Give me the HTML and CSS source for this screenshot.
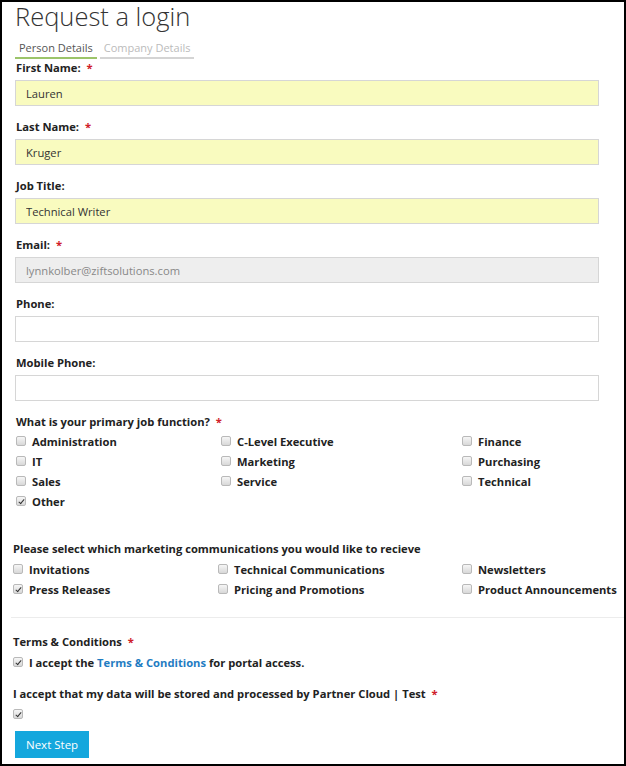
FILE: index.html
```html
<!DOCTYPE html>
<html>
<head>
	<title>Request a login</title>
	<meta charset="UTF-8">
	<meta name="viewport" content="width=device-width, initial-scale=1">
	<link rel="stylesheet" href="styles.css">
</head>
<body>
	<div class="frame">
		<h1 class="title">Request a login</h1>

		<div class="tabs">
			<span class="tab active">Person Details</span>
			<span class="tab">Company Details</span>
		</div>

		<form class="person">
			<div class="field">
				<label>First Name: <span class="req">*</span></label>
				<input type="text" class="filled" value="Lauren">
			</div>
			<div class="field">
				<label>Last Name: <span class="req">*</span></label>
				<input type="text" class="filled" value="Kruger">
			</div>
			<div class="field">
				<label>Job Title:</label>
				<input type="text" class="filled" value="Technical Writer">
			</div>
			<div class="field">
				<label>Email: <span class="req">*</span></label>
				<input type="text" class="locked" value="lynnkolber@ziftsolutions.com" readonly>
			</div>
			<div class="field">
				<label>Phone:</label>
				<input type="text">
			</div>
			<div class="field">
				<label>Mobile Phone:</label>
				<input type="text">
			</div>

			<div class="group">
				<label>What is your primary job function? <span class="req">*</span></label>
				<div class="options job">
					<label class="opt"><input type="checkbox"><span>Administration</span></label>
					<label class="opt"><input type="checkbox"><span>C-Level Executive</span></label>
					<label class="opt"><input type="checkbox"><span>Finance</span></label>
					<label class="opt"><input type="checkbox"><span>IT</span></label>
					<label class="opt"><input type="checkbox"><span>Marketing</span></label>
					<label class="opt"><input type="checkbox"><span>Purchasing</span></label>
					<label class="opt"><input type="checkbox"><span>Sales</span></label>
					<label class="opt"><input type="checkbox"><span>Service</span></label>
					<label class="opt"><input type="checkbox"><span>Technical</span></label>
					<label class="opt"><input type="checkbox" checked><span>Other</span></label>
				</div>
			</div>
		</form>

		<div class="comms">
			<label>Please select which marketing communications you would like to recieve</label>
			<div class="options mail">
				<label class="opt"><input type="checkbox"><span>Invitations</span></label>
				<label class="opt"><input type="checkbox"><span>Technical Communications</span></label>
				<label class="opt"><input type="checkbox"><span>Newsletters</span></label>
				<label class="opt"><input type="checkbox" checked><span>Press Releases</span></label>
				<label class="opt"><input type="checkbox"><span>Pricing and Promotions</span></label>
				<label class="opt"><input type="checkbox"><span>Product Announcements</span></label>
			</div>
		</div>

		<hr class="divider">

		<div class="terms">
			<label>Terms &amp; Conditions <span class="req">*</span></label>
			<label class="opt"><input type="checkbox" checked><span>I accept the <a href="#">Terms &amp; Conditions</a> for portal access.</span></label>

			<label class="consent">I accept that my data will be stored and processed by Partner Cloud | Test <span class="req">*</span></label>
			<label class="opt"><input type="checkbox" checked></label>

			<button type="button" class="btn">Next Step</button>
		</div>
	</div>
</body>
</html>
```

FILE: styles.css
```css
* {
	margin: 0;
	padding: 0;
	box-sizing: border-box;
}

html, body {
	width: 100%;
	height: 100%;
	background: white;
}

body {
	font-family: "Open Sans", "Noto Sans", sans-serif;
	font-size: 11.2px;
	color: #222;
}

.frame {
	height: 766px;
	border: 2px solid #000;
	padding-left: 9px;
	overflow: hidden;
}

.title {
	margin: -1px 0 -1px 4px;
	font-size: 25.5px;
	font-weight: 300;
	line-height: 30px;
	color: #333;
}

/* step tabs */
.tabs {
	display: flex;
	gap: 3px;
	margin: 8px 0 0 4px;
}

.tab {
	padding: 2px 4px 1px;
	font-size: 11px;
	line-height: 16px;
	color: #bbb;
	border-bottom: 2px solid #d4d4d4;
}

.tab.active {
	color: #555;
	border-bottom-color: #9cc46a;
}

/* person fields */
.person {
	padding: 0 25px 0 4px;
}

label {
	display: block;
	font-weight: 700;
	line-height: 17px;
}

.req {
	color: #d0202a;
	margin-left: 3px;
}

.field {
	margin-bottom: 12px;
}

.field label {
	padding-left: 1px;
	margin-bottom: 4px;
}

.field input {
	display: block;
	width: 100%;
	height: 26px;
	padding: 0 10px;
	border: 1px solid #d6d6d6;
	background: white;
	font-family: inherit;
	font-size: 11.2px;
	color: #333;
	outline: none;
}

.field input.filled {
	background: #f9fbbf;
}

.field input.locked {
	background: #eee;
	color: #888;
}

.group > label {
	padding-left: 1px;
	margin-bottom: 1px;
}

/* checkbox grids */
.options {
	display: grid;
}

.options.job {
	grid-template-columns: 205px 241px 1fr;
	padding-left: 1px;
}

.options.mail {
	grid-template-columns: 205px 244px 1fr;
}

.opt {
	display: flex;
	align-items: center;
	gap: 6px;
	height: 20px;
	white-space: nowrap;
}

.opt input {
	appearance: none;
	-webkit-appearance: none;
	position: relative;
	flex: none;
	width: 10px;
	height: 10px;
	border: 1px solid #b9b9b9;
	border-radius: 2px;
	background: linear-gradient(#f6f6f6, #d8d8d8);
}

.opt input:checked::after {
	content: "";
	position: absolute;
	left: 2.5px;
	top: 0.5px;
	width: 2px;
	height: 5px;
	border: solid #333;
	border-width: 0 1.5px 1.5px 0;
	transform: rotate(40deg);
}

.comms {
	margin: 29px 0 0 2px;
}

.comms > label {
	margin-bottom: 2px;
}

.divider {
	margin-top: 18px;
	border: 0;
	border-top: 1px solid #ececec;
}

.terms {
	margin: 15px 0 0 2px;
}

.terms > label:first-child {
	margin-bottom: 2px;
}

.terms a {
	color: #1f7cc2;
	text-decoration: none;
}

.consent {
	margin-top: 13px;
	margin-bottom: 2px;
}

.btn {
	display: block;
	margin: 7px 0 0 2px;
	height: 27px;
	padding: 0 11px;
	border: 0;
	background: #14a7dd;
	color: white;
	font-family: inherit;
	font-size: 11.5px;
	cursor: pointer;
}
```
